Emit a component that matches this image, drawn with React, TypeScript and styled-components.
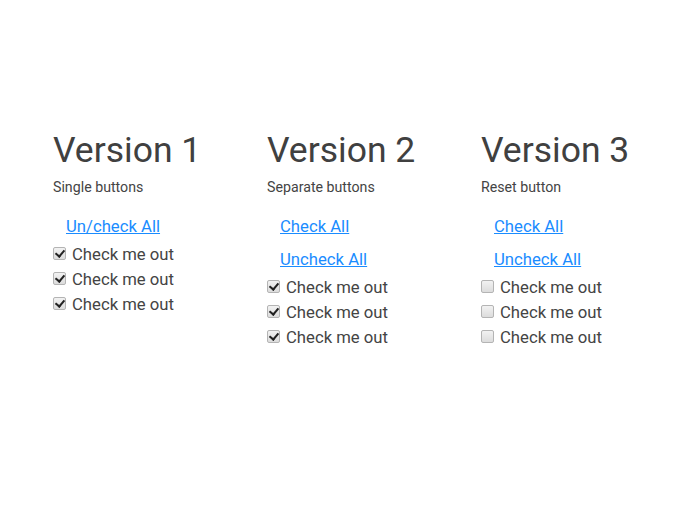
import React, { useState } from "react";
import styled, { createGlobalStyle } from "styled-components";

const Global = createGlobalStyle`
  html, body { margin: 0; padding: 0; background: #fff; }
  body { font-family: Roboto, "Liberation Sans", sans-serif; color: #444; }
`;

const Page = styled.div`
  display: grid;
  grid-template-columns: repeat(3, 214px);
  padding: 127px 0 0 53px;
`;

const Column = styled.section`
  display: flex;
  flex-direction: column;
  align-items: flex-start;
`;

const Title = styled.h1`
  margin: 0;
  font-size: 35.5px;
  line-height: 46px;
  font-weight: 400;
  color: #404040;
`;

const Subtitle = styled.p`
  margin: 4px 0 18px;
  font-size: 14.2px;
  line-height: 20px;
  color: #444;
`;

const LinkButton = styled.a`
  display: block;
  margin-left: 13px;
  font-size: 16.7px;
  line-height: 24px;
  margin-bottom: 9px;
  color: #1a8cff;
  text-decoration: underline;
  cursor: pointer;
`;

const List = styled.div`
  display: flex;
  flex-direction: column;
  margin-top: -6px;
`;

const Row = styled.label`
  display: flex;
  align-items: center;
  height: 25px;
  font-size: 16.7px;
  color: #444;
  gap: 6px;
`;

const Box = styled.input`
  appearance: none;
  margin: 0;
  width: 13px;
  height: 13px;
  border: 1px solid #b4b4b4;
  border-radius: 2px;
  background: linear-gradient(#f2f2f2, #dcdcdc);
  position: relative;
  top: -1px;
  flex: none;
  &:checked::after {
    content: "";
    position: absolute;
    left: 3px;
    top: 0px;
    width: 4px;
    height: 7px;
    border: solid #222;
    border-width: 0 2px 2px 0;
    transform: rotate(40deg);
  }
`;

type Props = { title: string; sub: string; links: string[]; initial: boolean };

const Version: React.FC<Props> = ({ title, sub, links, initial }) => {
  const [checked, setChecked] = useState([initial, initial, initial]);
  return (
    <Column>
      <Title>{title}</Title>
      <Subtitle>{sub}</Subtitle>
      {links.map((l) => (
        <LinkButton key={l} href="#">{l}</LinkButton>
      ))}
      <List>
        {checked.map((c, i) => (
          <Row key={i}>
            <Box
              type="checkbox"
              checked={c}
              onChange={() => setChecked(checked.map((v, j) => (j === i ? !v : v)))}
            />
            Check me out
          </Row>
        ))}
      </List>
    </Column>
  );
};

export default function App() {
  return (
    <>
      <Global />
      <Page>
        <Version title="Version 1" sub="Single buttons" links={["Un/check All"]} initial />
        <Version title="Version 2" sub="Separate buttons" links={["Check All", "Uncheck All"]} initial />
        <Version title="Version 3" sub="Reset button" links={["Check All", "Uncheck All"]} initial={false} />
      </Page>
    </>
  );
}
